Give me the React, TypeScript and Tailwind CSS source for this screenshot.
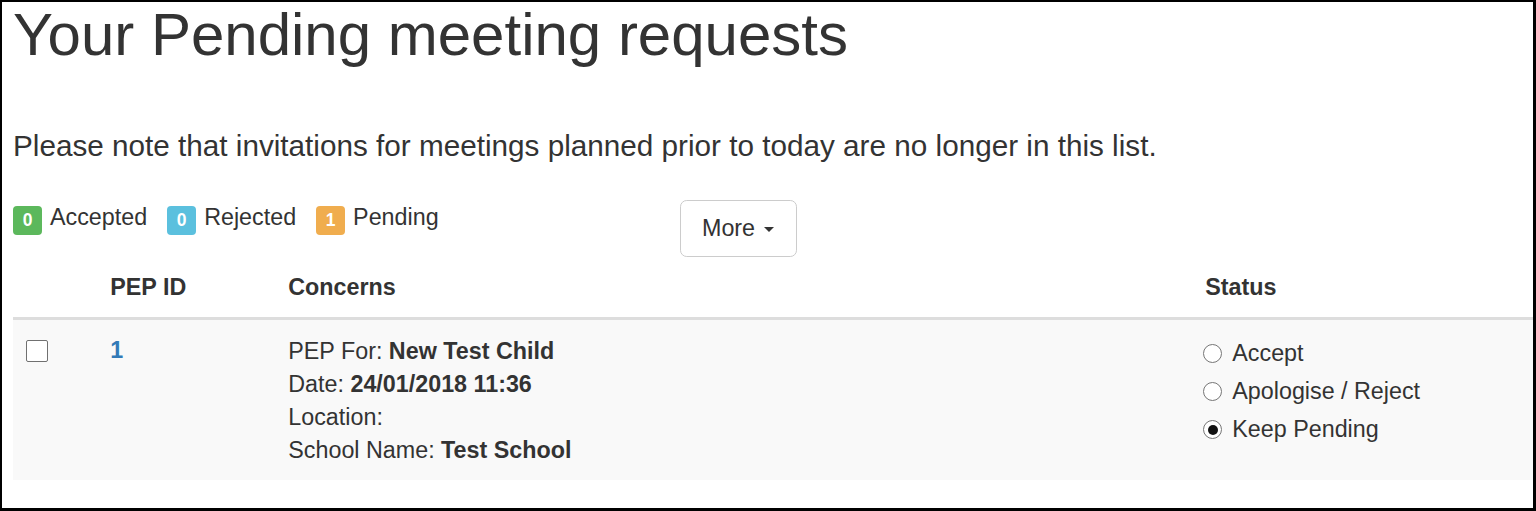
import React from "react";

function Badge({ color, n }: { color: string; n: string }) {
  return (
    <span
      className={`mt-[5px] flex h-[29px] w-[29px] items-center justify-center rounded-[4px] text-[17.5px] font-bold leading-none text-white ${color}`}
    >
      {n}
    </span>
  );
}

function Radio({ checked, label }: { checked?: boolean; label: string }) {
  return (
    <div className="flex h-[33.3px] items-center">
      <span className="-ml-[2px] mr-[10px] flex h-[19px] w-[19px] items-center justify-center rounded-full border border-[#767676] bg-white">
        {checked ? <span className="h-[10px] w-[10px] rounded-full bg-[#111]" /> : null}
      </span>
      <span>{label}</span>
    </div>
  );
}

export default function App() {
  return (
    <div
      className="box-border h-[511px] w-[1536px] overflow-hidden border-t-[2px] border-l-[2px] border-r-[3px] border-b-[3px] border-black bg-white pl-[11px] text-[#333]"
      style={{ fontFamily: '"Liberation Sans", Arial, sans-serif' }}
    >
      <h1 className="m-0 text-[60px] font-normal leading-[66px]">Your Pending meeting requests</h1>
      <p className="mt-[57px] text-[29.7px] leading-[42.4px]">
        Please note that invitations for meetings planned prior to today are no longer in this list.
      </p>
      <div className="mt-[33px] flex h-[57px] items-start text-[23.3px] leading-[33.3px]">
        <div className="flex w-[667px] items-start pt-[1px]">
          <Badge color="bg-[#5cb85c]" n="0" />
          <span className="ml-[8px]">Accepted</span>
          <span className="ml-[20px]">
            <Badge color="bg-[#5bc0de]" n="0" />
          </span>
          <span className="ml-[8px]">Rejected</span>
          <span className="ml-[20px]">
            <Badge color="bg-[#f0ad4e]" n="1" />
          </span>
          <span className="ml-[8px]">Pending</span>
        </div>
        <button className="box-border flex h-[57px] items-center rounded-[6.7px] border-[1.67px] border-[#ccc] bg-white pl-[21px] pr-[22px] text-[23.3px] leading-[33.3px] text-[#333]">
          <span>More</span>
          <span className="ml-[9px] mt-[2px] h-0 w-0 border-x-[5px] border-t-[5px] border-x-transparent border-t-[#333]" />
        </button>
      </div>
      <div className="w-[1520px] text-[23.3px] leading-[33.3px]">
        <div className="flex border-b-[3px] border-[#ddd] font-bold">
          <div className="w-[84px] p-[13.3px]" />
          <div className="w-[178px] p-[13.3px]">PEP ID</div>
          <div className="w-[917px] p-[13.3px]">Concerns</div>
          <div className="w-[341px] p-[13.3px]">Status</div>
        </div>
        <div className="flex bg-[#f9f9f9]">
          <div className="w-[84px] p-[13.3px]">
            <div className="mt-[6px] box-border h-[22px] w-[22px] rounded-[2px] border-[1.5px] border-[#707070] bg-white" />
          </div>
          <div className="w-[178px] p-[13.3px] font-bold text-[#337ab7]">1</div>
          <div className="w-[917px] px-[13.3px] pt-[14.3px] pb-[12.3px]">
            <div>
              PEP For: <b>New Test Child</b>
            </div>
            <div>
              Date: <b>24/01/2018 11:36</b>
            </div>
            <div>Location:</div>
            <div>
              School Name: <b>Test School</b>
            </div>
          </div>
          <div className="w-[341px] p-[13.3px]">
            <div className="mt-[3px] flex flex-col gap-[5px]">
              <Radio label="Accept" />
              <Radio label="Apologise / Reject" />
              <Radio checked label="Keep Pending" />
            </div>
          </div>
        </div>
      </div>
    </div>
  );
}
